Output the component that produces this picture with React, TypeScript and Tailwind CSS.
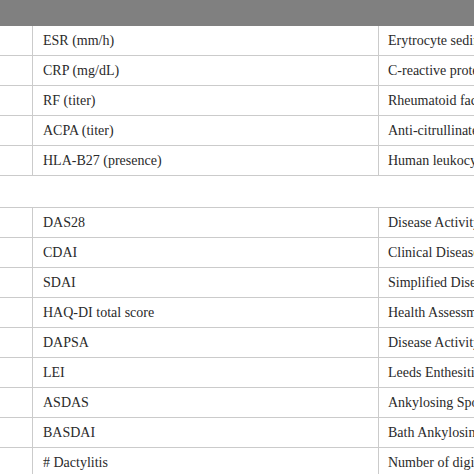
import React from "react";

type Row = { name: string; desc: string };

const labs: Row[] = [
  { name: "ESR (mm/h)", desc: "Erytrocyte sedimentation rate" },
  { name: "CRP (mg/dL)", desc: "C-reactive protein" },
  { name: "RF (titer)", desc: "Rheumatoid factor" },
  { name: "ACPA (titer)", desc: "Anti-citrullinated protein antibodies" },
  { name: "HLA-B27 (presence)", desc: "Human leukocyte antigen B27" },
];

const scores: Row[] = [
  { name: "DAS28", desc: "Disease Activity Score 28" },
  { name: "CDAI", desc: "Clinical Disease Activity Index" },
  { name: "SDAI", desc: "Simplified Disease Activity Index" },
  { name: "HAQ-DI total score", desc: "Health Assessment Questionnaire" },
  { name: "DAPSA", desc: "Disease Activity in Psoriatic Arthritis" },
  { name: "LEI", desc: "Leeds Enthesitis Index" },
  { name: "ASDAS", desc: "Ankylosing Spondylitis Disease Activity Score" },
  { name: "BASDAI", desc: "Bath Ankylosing Spondylitis Disease Activity Index" },
  { name: "# Dactylitis", desc: "Number of digits with dactylitis" },
];

function TableRow({ row }: { row: Row }) {
  return (
    <div className="flex h-[30px] border-b border-[#cbcbcb]">
      <div className="w-[33px] shrink-0 border-r border-[#cbcbcb]" />
      <div className="w-[346px] shrink-0 border-r border-[#cbcbcb] flex items-center pl-[10px] whitespace-nowrap overflow-hidden">
        {row.name}
      </div>
      <div className="flex-1 flex items-center pl-[9px] whitespace-nowrap overflow-hidden">
        {row.desc}
      </div>
    </div>
  );
}

export default function App() {
  return (
    <div
      className="w-[474px] h-[474px] overflow-hidden bg-white text-[14px] text-[#2a2a2a]"
      style={{ fontFamily: '"Liberation Serif", "Times New Roman", serif' }}
    >
      <div className="h-[26px] bg-[#808080]" />
      {labs.map((r) => (
        <TableRow key={r.name} row={r} />
      ))}
      <div className="h-[32px] border-b border-[#cbcbcb]" />
      {scores.map((r) => (
        <TableRow key={r.name} row={r} />
      ))}
    </div>
  );
}
